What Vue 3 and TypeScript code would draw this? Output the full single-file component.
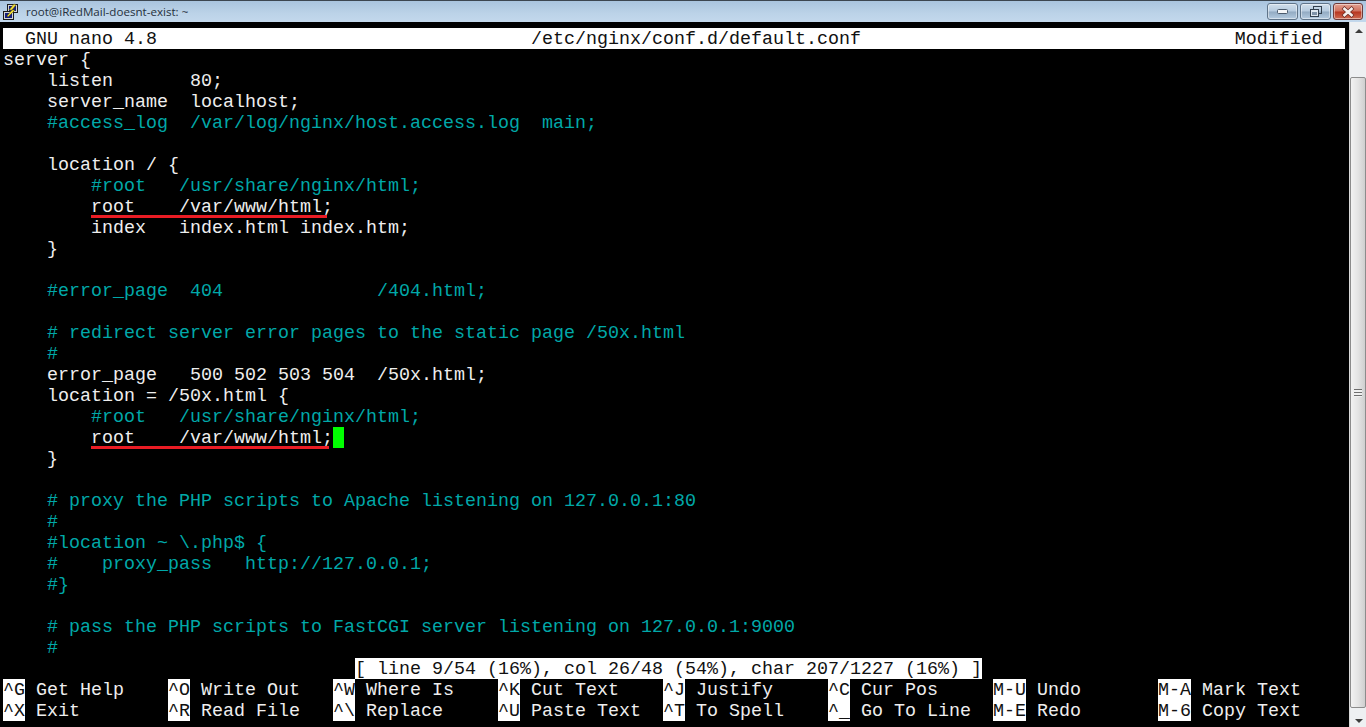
<script setup lang="ts">
type Seg = { text: string; kind?: string }
type Row = { segs: Seg[]; mark?: number }

const code = (text: string): Seg[] => {
  const hash = text.indexOf("#")
  if (hash < 0) return [{ text }]
  return [{ text: text.slice(0, hash) }, { text: text.slice(hash), kind: "comment" }]
}

const line = (text: string, mark?: number): Row => ({ segs: code(text), mark })

const keySegs = (key: string): Seg[] =>
  key === "^_"
    ? [{ text: "^", kind: "inverse" }, { text: "_", kind: "inverse low" }]
    : [{ text: key, kind: "inverse" }]

const shortcuts = (items: [string, string][]): Row => ({
  segs: items.flatMap(([key, label]) => [
    ...keySegs(key),
    { text: (" " + label).padEnd(15 - key.length) },
  ]),
})

const rows: Row[] = [
  {
    segs: [
      {
        text: "  GNU nano 4.8".padEnd(48) + "/etc/nginx/conf.d/default.conf".padEnd(64) + "Modified".padEnd(10),
        kind: "inverse",
      },
    ],
  },
  line("server {"),
  line("    listen       80;"),
  line("    server_name  localhost;"),
  line("    #access_log  /var/log/nginx/host.access.log  main;"),
  line(""),
  line("    location / {"),
  line("        #root   /usr/share/nginx/html;"),
  line("        root    /var/www/html;", 236),
  line("        index   index.html index.htm;"),
  line("    }"),
  line(""),
  line("    #error_page  404              /404.html;"),
  line(""),
  line("    # redirect server error pages to the static page /50x.html"),
  line("    #"),
  line("    error_page   500 502 503 504  /50x.html;"),
  line("    location = /50x.html {"),
  line("        #root   /usr/share/nginx/html;"),
  {
    segs: [{ text: "        root    /var/www/html;" }, { text: " ", kind: "cursor" }],
    mark: 238,
  },
  line("    }"),
  line(""),
  line("    # proxy the PHP scripts to Apache listening on 127.0.0.1:80"),
  line("    #"),
  line("    #location ~ \\.php$ {"),
  line("    #    proxy_pass   http://127.0.0.1;"),
  line("    #}"),
  line(""),
  line("    # pass the PHP scripts to FastCGI server listening on 127.0.0.1:9000"),
  line("    #"),
  {
    segs: [
      { text: " ".repeat(32) },
      { text: "[ line 9/54 (16%), col 26/48 (54%), char 207/1227 (16%) ]", kind: "inverse" },
    ],
  },
  shortcuts([
    ["^G", "Get Help"],
    ["^O", "Write Out"],
    ["^W", "Where Is"],
    ["^K", "Cut Text"],
    ["^J", "Justify"],
    ["^C", "Cur Pos"],
    ["M-U", "Undo"],
    ["M-A", "Mark Text"],
  ]),
  shortcuts([
    ["^X", "Exit"],
    ["^R", "Read File"],
    ["^\\", "Replace"],
    ["^U", "Paste Text"],
    ["^T", "To Spell"],
    ["^_", "Go To Line"],
    ["M-E", "Redo"],
    ["M-6", "Copy Text"],
  ]),
]
</script>

<template>
  <div class="window">
    <header class="titlebar">
      <svg class="app-icon" width="18" height="18" viewBox="0 0 18 18">
        <rect x="6.5" y="1.5" width="10" height="8" fill="#d4d4d4" stroke="#1c1c1c" />
        <rect x="8" y="3" width="7" height="5" fill="#16207a" />
        <rect x="2.5" y="8.5" width="10" height="8" fill="#d4d4d4" stroke="#1c1c1c" />
        <rect x="4" y="10" width="7" height="5" fill="#16207a" />
        <path d="M13 1 L8 7 L11 7 L6 13 L7 14 L14 7 L11 7 L15 2 Z" fill="#f4e23a" stroke="#5a4c00" stroke-width="0.5" />
      </svg>
      <span class="title">root@iRedMail-doesnt-exist: ~</span>
      <div class="controls">
        <button class="ctl">
          <svg width="12" height="6" viewBox="0 0 12 6"><rect x="0.5" y="0.5" width="10" height="4" rx="1" fill="#f4f6f8" stroke="#4a5a6c" /></svg>
        </button>
        <button class="ctl">
          <svg width="14" height="12" viewBox="0 0 14 12">
            <rect x="4.5" y="0.5" width="8" height="7" fill="none" stroke="#33404e" />
            <rect x="1.5" y="3.5" width="8" height="7" fill="#dfe8f0" stroke="#33404e" />
            <rect x="3" y="6" width="5" height="3" fill="#7f93a8" />
          </svg>
        </button>
        <button class="ctl close">
          <svg width="14" height="12" viewBox="0 0 14 12">
            <path d="M2 1.5 L12 10.5 M12 1.5 L2 10.5" stroke="#6a2a22" stroke-width="4" />
            <path d="M2.5 2 L11.5 10 M11.5 2 L2.5 10" stroke="#f5f0ee" stroke-width="2.6" />
          </svg>
        </button>
      </div>
    </header>
    <div class="body">
      <main class="term">
        <div v-for="(row, i) in rows" :key="i" class="row">
          <span v-for="(seg, j) in row.segs" :key="j" :class="seg.kind">{{ seg.text }}</span>
          <i v-if="row.mark" class="mark" :style="{ width: row.mark + 'px' }"></i>
        </div>
      </main>
      <aside class="scrollbar">
        <span class="arrow up"></span>
        <div class="thumb"><span class="grip"></span></div>
        <span class="arrow down"></span>
      </aside>
    </div>
  </div>
</template>

<style>
html,
body {
  margin: 0;
  background: #000;
  overflow: hidden;
}
</style>

<style scoped>
.window {
  width: 1366px;
  height: 727px;
  display: flex;
  flex-direction: column;
  overflow: hidden;
  background: #000;
}
.titlebar {
  height: 21px;
  flex: none;
  border-top: 1px solid #3c4650;
  display: flex;
  align-items: center;
  padding-left: 1px;
  background: linear-gradient(#a9c4de, #bcd3e8 60%, #c3d8ec);
  font-family: "Open Sans", "Liberation Sans", sans-serif;
  font-size: 11.6px;
  color: #25303c;
}
.app-icon {
  flex: none;
}
.title {
  margin-left: 7px;
  flex: 1;
}
.controls {
  display: flex;
  gap: 2px;
  align-self: flex-start;
  padding: 2px 3px 0 0;
}
.ctl {
  width: 31px;
  height: 17px;
  padding: 0;
  border: 1px solid #5f7489;
  border-radius: 3px;
  display: flex;
  align-items: center;
  justify-content: center;
  background: linear-gradient(#d0deeb, #b6cbdf 48%, #92aac2 52%, #b4cbe0);
  box-shadow: inset 0 0 0 1px rgba(255, 255, 255, 0.45);
}
.close {
  width: 30px;
  border-color: #6e3a3a;
  background: linear-gradient(#e2a192, #cf6f5c 48%, #b6341f 52%, #cf6a52);
}
.body {
  flex: 1;
  display: flex;
  min-height: 0;
}
.term {
  flex: 1;
  min-width: 0;
  padding: 6px 0 0 3px;
  font-family: "Liberation Mono", monospace;
  font-size: 18.334px;
  line-height: 21px;
  color: #eeeeee;
}
.row {
  position: relative;
  height: 21px;
  white-space: pre;
}
.row span {
  display: inline-block;
  vertical-align: top;
  height: 21px;
  line-height: 23px;
}
.comment {
  color: #00a8a8;
}
.inverse {
  background: #fff;
  color: #111;
}
.row .low {
  line-height: 26px;
}
.cursor {
  background: #00ff00;
}
.mark {
  position: absolute;
  left: 88px;
  top: 19px;
  height: 3px;
  background: #ea1c24;
}
.scrollbar {
  width: 17px;
  flex: none;
  display: flex;
  flex-direction: column;
  background: #eef0f2;
  border-left: 1px solid #d8d8d8;
  box-sizing: border-box;
}
.arrow {
  height: 17px;
  flex: none;
  position: relative;
}
.arrow::after {
  content: "";
  position: absolute;
  left: 5px;
  border-left: 4px solid transparent;
  border-right: 4px solid transparent;
}
.up::after {
  top: 7px;
  border-bottom: 4px solid #3c3c3c;
}
.down::after {
  top: 9px;
  border-top: 4px solid #3c3c3c;
}
.thumb {
  flex: 1;
  margin: 38px 0 2px;
  border: 1px solid #8c8c8c;
  border-radius: 2px;
  background: linear-gradient(90deg, #f2f2f2, #e4e4e4 50%, #cfcfcf);
  display: flex;
  align-items: center;
  justify-content: center;
}
.grip {
  width: 8px;
  height: 8px;
  background: repeating-linear-gradient(#6e6e6e 0 1px, #f0f0f0 1px 3px);
}
</style>
